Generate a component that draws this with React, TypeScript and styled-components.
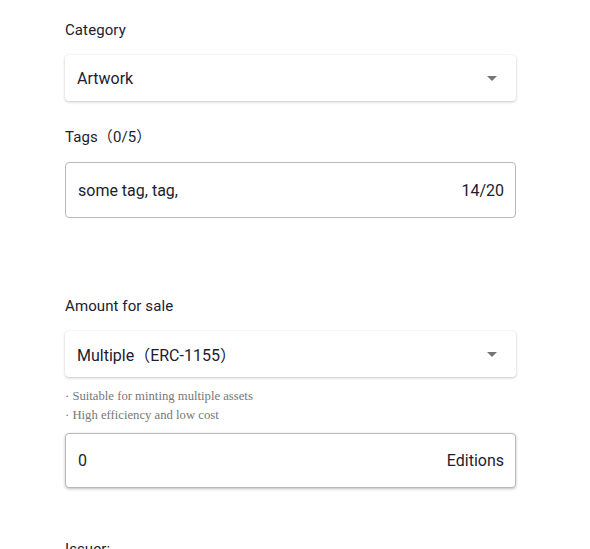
import styled, { createGlobalStyle } from 'styled-components'

const GlobalStyle = createGlobalStyle`
	body {
		margin: 0;
		background: #fff;
		font-family: Roboto, 'Noto Sans CJK SC', sans-serif;
		color: #211c30;
	}
`

const Form = styled.div`
	width: 451px;
	padding: 20px 0 0 65px;
	display: flex;
	flex-direction: column;
`

const Field = styled.section<{ $gap?: number }>`
	display: flex;
	flex-direction: column;
	margin-top: ${({ $gap }) => $gap ?? 0}px;
`

const Label = styled.div`
	font-size: 15px;
	line-height: 20px;
	letter-spacing: 0.1px;
	margin-bottom: 15px;
`

const Select = styled.div`
	height: 46px;
	box-sizing: border-box;
	display: flex;
	align-items: center;
	justify-content: space-between;
	padding: 0 19px 0 12px;
	border-radius: 4px;
	background: #fff;
	box-shadow: 0 1px 3px rgba(0, 0, 0, 0.22), 0 0 1px rgba(0, 0, 0, 0.08);
	font-size: 16px;
`

const Caret = styled.span`
	width: 0;
	height: 0;
	border-left: 5px solid transparent;
	border-right: 5px solid transparent;
	border-top: 5px solid #757575;
`

const Input = styled.div<{ $raised?: boolean }>`
	height: ${({ $raised }) => ($raised ? 55 : 56)}px;
	box-sizing: border-box;
	display: flex;
	align-items: center;
	justify-content: space-between;
	padding: 0 11px 0 12px;
	border: 1px solid #b9b9b9;
	border-radius: 4px;
	background: #fff;
	font-size: 16px;
	box-shadow: ${({ $raised }) =>
		$raised ? '0 1px 3px rgba(0, 0, 0, 0.25)' : 'none'};
`

const Hints = styled.div`
	margin: 10px 0 8px;
	font-family: 'Liberation Serif', serif;
	font-size: 12.7px;
	line-height: 19px;
	color: #777;
`

const Suffix = styled.span`
	font-size: 16px;
`

export default function App() {
	return (
		<>
			<GlobalStyle />
			<Form>
				<Field>
					<Label>Category</Label>
					<Select>
						Artwork
						<Caret />
					</Select>
				</Field>
				<Field $gap={26}>
					<Label>Tags（0/5）</Label>
					<Input>
						some tag, tag,
						<Suffix>14/20</Suffix>
					</Input>
				</Field>
				<Field $gap={78}>
					<Label>Amount for sale</Label>
					<Select>
						Multiple（ERC-1155）
						<Caret />
					</Select>
					<Hints>
						<div>· Suitable for minting multiple assets</div>
						<div>· High efficiency and low cost</div>
					</Hints>
					<Input $raised>
						0
						<Suffix>Editions</Suffix>
					</Input>
				</Field>
				<Field $gap={51}>
					<Label>Issuer:</Label>
				</Field>
			</Form>
		</>
	)
}
